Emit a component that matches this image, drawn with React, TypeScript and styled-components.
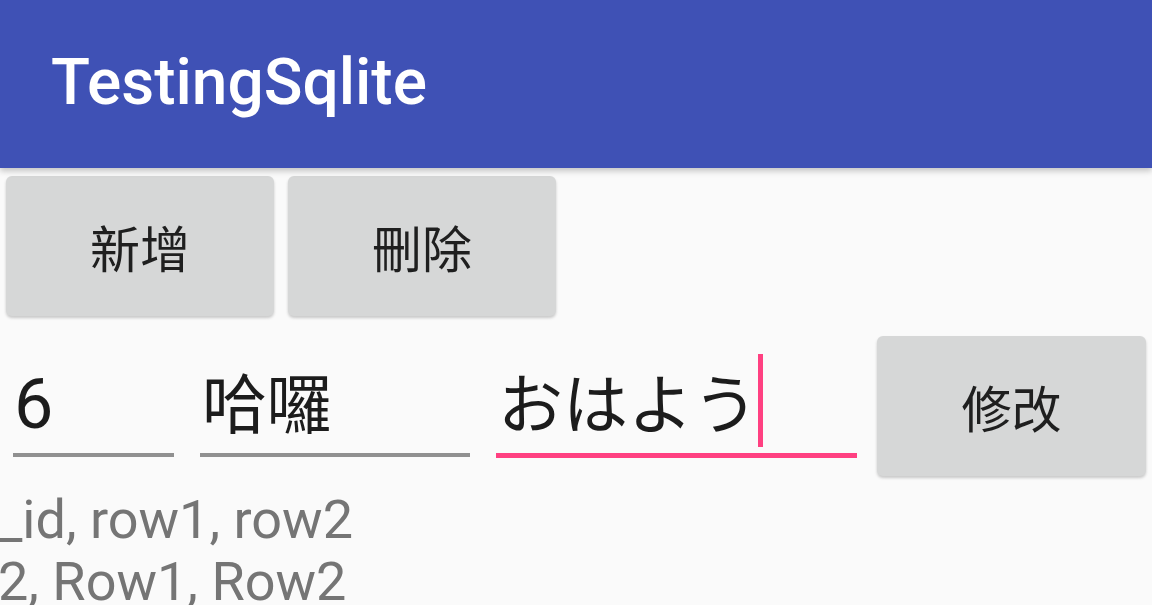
import React from "react";
import styled, { createGlobalStyle } from "styled-components";

const GlobalStyle = createGlobalStyle`
  html, body {
    margin: 0;
    padding: 0;
    background: #fafafa;
    overflow: hidden;
  }
  * {
    box-sizing: border-box;
  }
`;

const FONT = `Roboto, "Noto Sans CJK TC", "Noto Sans CJK JP", sans-serif`;

const Screen = styled.div`
  width: 1152px;
  height: 605px;
  background: #fafafa;
  font-family: ${FONT};
  overflow: hidden;
`;

const AppBar = styled.header`
  position: relative;
  z-index: 1;
  height: 168px;
  padding: 51px 0 0 51px;
  background: #3f51b5;
  box-shadow: 0 3px 6px rgba(0, 0, 0, 0.22);
`;

const Title = styled.h1`
  margin: 0;
  font-size: 64px;
  line-height: 1;
  font-weight: 500;
  color: #ffffff;
`;

const ButtonRow = styled.div`
  display: flex;
  gap: 14px;
  padding: 8px 6px 0;
`;

const RaisedButton = styled.button<{ $width: number }>`
  width: ${(p) => p.$width}px;
  height: 140px;
  flex: none;
  border: none;
  border-radius: 6px;
  background: #d6d7d7;
  box-shadow: 0 2px 3px rgba(0, 0, 0, 0.2);
  font-family: ${FONT};
  font-size: 50px;
  color: #1f1f1f;
  padding: 0;
  cursor: pointer;
`;

const EditRow = styled.div`
  display: flex;
  align-items: flex-start;
  padding: 20px 6px 0 13px;
`;

const Field = styled.div<{ $width: number; $focused?: boolean }>`
  width: ${(p) => p.$width}px;
  height: ${(p) => (p.$focused ? 122 : 121)}px;
  margin-right: 26px;
  display: flex;
  align-items: flex-end;
  border-bottom: ${(p) => (p.$focused ? "5px solid #ff4081" : "4px solid #909090")};
`;

const FieldText = styled.span<{ $inset: number; $size?: number }>`
  padding: 0 0 14px ${(p) => p.$inset}px;
  font-size: ${(p) => p.$size ?? 65}px;
  line-height: 1;
  color: #1c1c1c;
  white-space: nowrap;
`;

const Caret = styled.span`
  width: 5px;
  height: 93px;
  margin: 0 0 6px 0;
  background: #ff4081;
`;

const ModifyButton = styled(RaisedButton)`
  margin-left: -6px;
`;

const Output = styled.div`
  margin: 13px 0 0 -2px;
  font-size: 54px;
  line-height: 62px;
  color: #757575;
  white-space: pre;
`;

export default function App() {
  return (
    <>
      <GlobalStyle />
      <Screen>
        <AppBar>
          <Title>TestingSqlite</Title>
        </AppBar>
        <ButtonRow>
          <RaisedButton $width={268}>新增</RaisedButton>
          <RaisedButton $width={268}>刪除</RaisedButton>
        </ButtonRow>
        <EditRow>
          <Field $width={161}>
            <FieldText $inset={1} $size={70}>6</FieldText>
          </Field>
          <Field $width={270}>
            <FieldText $inset={2}>哈囉</FieldText>
          </Field>
          <Field $width={361} $focused>
            <FieldText $inset={2} lang="ja">
              おはよう
            </FieldText>
            <Caret />
          </Field>
          <ModifyButton $width={269}>修改</ModifyButton>
        </EditRow>
        <Output>{"_id, row1, row2\n2, Row1, Row2"}</Output>
      </Screen>
    </>
  );
}
